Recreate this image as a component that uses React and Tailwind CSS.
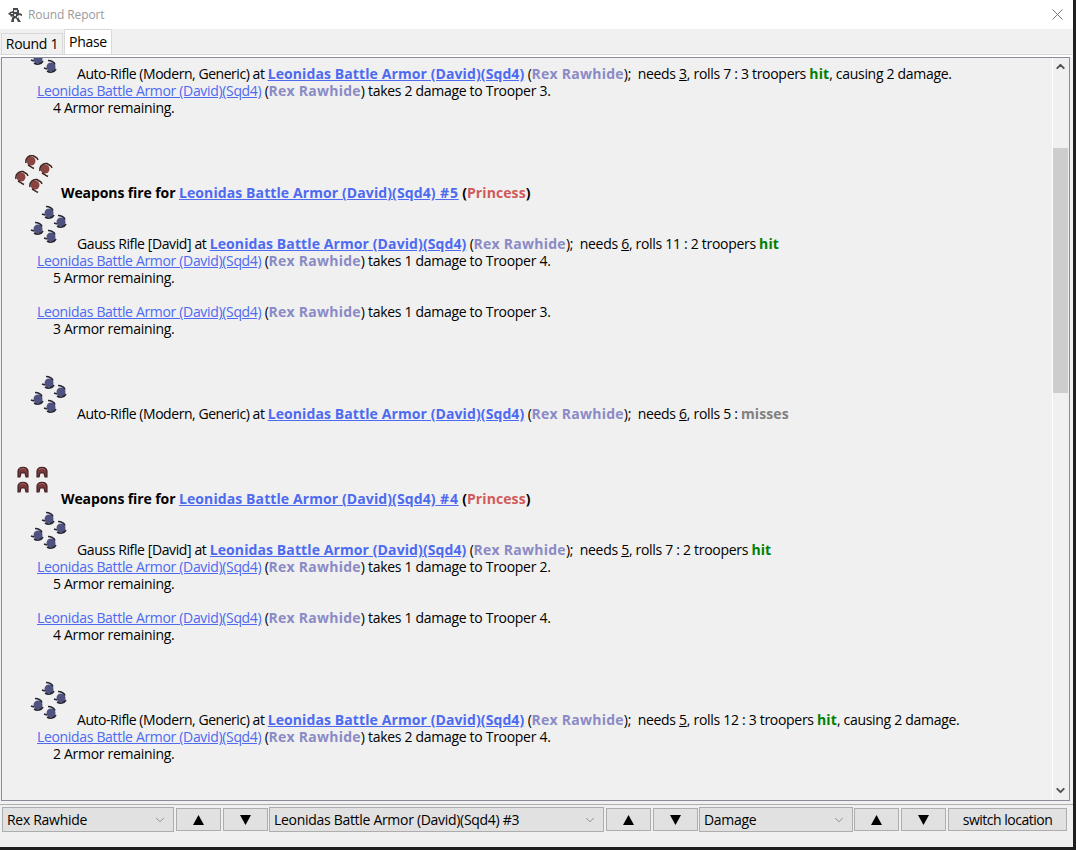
import { ChevronDown, ChevronUp } from 'lucide-react'

const FONT = "font-['Open_Sans','Liberation_Sans',sans-serif]"

const BLUE_PTS = [[19, 8], [31, 17], [8, 24], [21, 32]]
const RED_PTS = [[16, 6], [30, 14], [6, 22], [20, 30]]
const HEAD_PTS = [[8, 6], [27, 6], [8, 21], [27, 21]]

function BlueSquad() {
  return (
    <svg width="40" height="40" viewBox="0 0 40 40" className="block">
      {BLUE_PTS.map(([x, y]) => (
        <g key={`${x}${y}`} transform={`translate(${x} ${y})`}>
          <circle cx="0" cy="0" r="4.5" fill="#50527f" />
          <path d="M-3 -6.5 C0 -6.5 3 -5 4 -2.5 M-7 1 L-4 2 M-4 4 C-1 6 3 5.5 5 2" fill="none" stroke="#23242f" strokeWidth="1.6" />
        </g>
      ))}
    </svg>
  )
}

function RedSquad() {
  return (
    <svg width="38" height="38" viewBox="0 0 38 38" className="block">
      {RED_PTS.map(([x, y]) => (
        <g key={`${x}${y}`} transform={`translate(${x} ${y})`}>
          <circle cx="0" cy="0" r="4.5" fill="#8a4540" />
          <path d="M-5 2 C-6 -3 -2 -6 2 -5.5 L6 -3 L7 -1 M-3 4 C-1 5 0 6 3 7.5" fill="none" stroke="#3e2320" strokeWidth="1.5" />
        </g>
      ))}
    </svg>
  )
}

function RedHeads() {
  return (
    <svg width="36" height="30" viewBox="0 0 36 30" className="block">
      {HEAD_PTS.map(([x, y]) => (
        <g key={`${x}${y}`} transform={`translate(${x} ${y})`}>
          <path d="M-5 5 L-5 -1 C-5 -6 5 -6 5 -1 L5 5 L3 5 L2 1 L-2 1 L-3 5 Z" fill="#7a3a3c" stroke="#3a1c20" strokeWidth="1.1" />
          <path d="M-3 -2 C-2 -4 2 -4 3 -2" fill="none" stroke="#a86060" strokeWidth="1" />
        </g>
      ))}
    </svg>
  )
}

function Unit() {
  return <a className="text-[#4d6af0] underline tracking-[-0.33px]">Leonidas Battle Armor (David)(Sqd4)</a>
}

function UnitBold({ suffix = '' }) {
  return (
    <a className="font-bold text-[#4d6af0] underline tracking-[0.1px]">
      Leonidas Battle Armor (David)(Sqd4)<span className="tracking-[0.8px]">{suffix}</span>
    </a>
  )
}

function Rex() {
  return <>(<b className="text-[#8a8ac6] tracking-[0.25px]">Rex Rawhide</b>)</>
}

function Line({ children, indent = 'pl-[35px]' }) {
  return <div className={`h-[17px] leading-[17px] whitespace-nowrap ${indent}`}>{children}</div>
}

function Damage({ trooper, amount, left }) {
  return (
    <>
      <Line><Unit /> <Rex /> takes {amount} damage to Trooper {trooper}.</Line>
      <Line indent="pl-[51px]">{left} Armor remaining.</Line>
    </>
  )
}

function Shot({ weapon, needs, rolls, result, className = '', weaponClass = 'tracking-[-0.45px]' }) {
  return (
    <div className={`h-[47px] flex items-end pl-[28px] ${className}`}>
      <div className="w-[47px] h-[47px] shrink-0"><BlueSquad /></div>
      <div className="h-[17px] leading-[17px] whitespace-nowrap">
        <span className={weaponClass}>{weapon} at </span><UnitBold /> <Rex />;&nbsp; needs <u>{needs}</u>, rolls {rolls} : {result}
      </div>
    </div>
  )
}

function Header({ icon, suffix, className = '' }) {
  return (
    <div className={`h-[46px] flex items-end pl-[13px] ${className}`}>
      <div className="w-[46px] h-[46px] shrink-0">{icon}</div>
      <div className="h-[17px] leading-[17px] whitespace-nowrap font-bold tracking-[-0.1px]">
        Weapons fire for <UnitBold suffix={suffix} /> (<span className="text-[#d05a5a] tracking-[0.1px]">Princess</span>)
      </div>
    </div>
  )
}

function Combo({ label, className }) {
  return (
    <div className={`h-[25px] flex items-center justify-between pl-[4px] pr-[6px] bg-[#e1e1e1] border border-[#adadad] ${className}`}>
      <span className="whitespace-nowrap">{label}</span>
      <ChevronDown className="w-[14px] h-[14px] text-[#707070]" strokeWidth={1.25} />
    </div>
  )
}

function Arrow({ down, className = '' }) {
  return (
    <button className={`h-[23px] w-[45px] bg-[#e1e1e1] border border-[#adadad] flex items-center justify-center text-black ${className}`}>
      <svg width="11" height="10" viewBox="0 0 11 10">
        <path d={down ? 'M0 0H11L5.5 10Z' : 'M0 10H11L5.5 0Z'} fill="#000" />
      </svg>
    </button>
  )
}

export default function App() {
  const hit = <b className="text-[#008000] tracking-[0.1px]">hit</b>
  return (
    <div className={`w-[1076px] h-[850px] bg-[#202020] overflow-hidden text-[14px] tracking-[-0.3px] text-black ${FONT}`}>
      <div className="w-[1073px] h-[847px] bg-[#f0f0f0] flex flex-col">
        <div className="h-[29px] bg-white flex items-center shrink-0 pl-[8px]">
          <svg width="15" height="16" viewBox="0 0 15 16" className="mr-[5px]">
            <path d="M5 1h5v2h1v3l3 1v2l-3-1-1 1 1 3 2 3h-3L8 11 6 12v3H3l1-4 1-2-2 1-1-2-2-1 2-2 3-1z" fill="#4a4a4a" />
            <path d="M6 3h3v2H6zM3 6h2v1H3zM9 9h1v2H9zM6 7h2v2H6z" fill="#e4e4e4" />
          </svg>
          <span className="text-[12px] tracking-[-0.1px] text-[#9a9a9a]">Round Report</span>
          <svg width="11" height="11" viewBox="0 0 11 11" className="ml-auto mr-[10px]">
            <path d="M0.5 0.5L10.5 10.5M10.5 0.5L0.5 10.5" stroke="#777" strokeWidth="1" />
          </svg>
        </div>

        <div className="h-[25px] flex items-end pl-[1px] shrink-0">
          <div className="h-[21px] w-[62px] bg-[#f0f0f0] border border-b-0 border-[#d9d9d9] text-center leading-[20px]">Round 1</div>
          <div className="h-[25px] w-[48px] ml-[1px] bg-white border border-b-0 border-[#d9d9d9] text-center leading-[23px]">Phase</div>
        </div>

        <div className="h-[3px] bg-white border-t border-[#d9d9d9] mr-[1px] shrink-0" />

        <div className="h-[744px] mr-[3px] ml-[1px] border border-[#8c8c98] flex shrink-0 overflow-hidden">
          <div className="flex-1 overflow-hidden">
            <div className="-mt-[23px]">
              <Shot weapon="Auto-Rifle (Modern, Generic)" needs="3" rolls="7" result={<>3 troopers {hit}, causing 2 damage.</>} />
              <Damage trooper="3" amount="2" left="4" />

              <Header icon={<RedSquad />} suffix=" #5" className="mt-[39px]" />
              <Shot className="mt-[4px]" weaponClass="tracking-[-0.39px]" weapon="Gauss Rifle [David]" needs="6" rolls="11" result={<>2 troopers {hit}</>} />
              <Damage trooper="4" amount="1" left="5" />
              <div className="h-[17px]" />
              <Damage trooper="3" amount="1" left="3" />

              <Shot className="mt-[38px]" weapon="Auto-Rifle (Modern, Generic)" needs="6" rolls="5" result={<b className="text-[#808080] tracking-[0.1px]">misses</b>} />

              <Header icon={<div className="pt-[5px]"><RedHeads /></div>} suffix=" #4" className="mt-[39px]" />
              <Shot className="mt-[4px]" weaponClass="tracking-[-0.39px]" weapon="Gauss Rifle [David]" needs="5" rolls="7" result={<>2 troopers {hit}</>} />
              <Damage trooper="2" amount="1" left="5" />
              <div className="h-[17px]" />
              <Damage trooper="4" amount="1" left="4" />

              <Shot className="mt-[38px]" weapon="Auto-Rifle (Modern, Generic)" needs="5" rolls="12" result={<>3 troopers {hit}, causing 2 damage.</>} />
              <Damage trooper="4" amount="2" left="2" />
            </div>
          </div>

          <div className="w-[17px] border-l border-white bg-[#f0f0f0] flex flex-col items-center shrink-0">
            <ChevronUp className="w-[13px] h-[13px] mt-[2px] mr-[1px] text-[#505050]" strokeWidth={3.5} />
            <div className="w-[15px] self-start h-[245px] mt-[75px] bg-[#cdcdcd]" />
            <ChevronDown className="w-[13px] h-[13px] mt-auto mb-[3px] mr-[1px] text-[#505050]" strokeWidth={3.5} />
          </div>
        </div>

        <div className="h-[1px] mt-[3px] bg-[#b0b0b0] shrink-0" />

        <div className="flex items-center pl-[2px] pt-[2px] shrink-0">
          <Combo label="Rex Rawhide" className="w-[172px]" />
          <Arrow className="ml-[2px]" />
          <Arrow className="ml-[2px]" down />
          <Combo label="Leonidas Battle Armor (David)(Sqd4) #3" className="w-[335px] ml-[1px]" />
          <Arrow className="ml-[2px]" />
          <Arrow className="ml-[2px]" down />
          <Combo label="Damage" className="w-[154px] ml-[1px]" />
          <Arrow className="ml-[1px]" />
          <Arrow className="ml-[2px]" down />
          <button className="h-[23px] w-[119px] ml-[2px] bg-[#e1e1e1] border border-[#adadad] text-center tracking-[-0.5px]">switch location</button>
        </div>
      </div>
    </div>
  )
}
